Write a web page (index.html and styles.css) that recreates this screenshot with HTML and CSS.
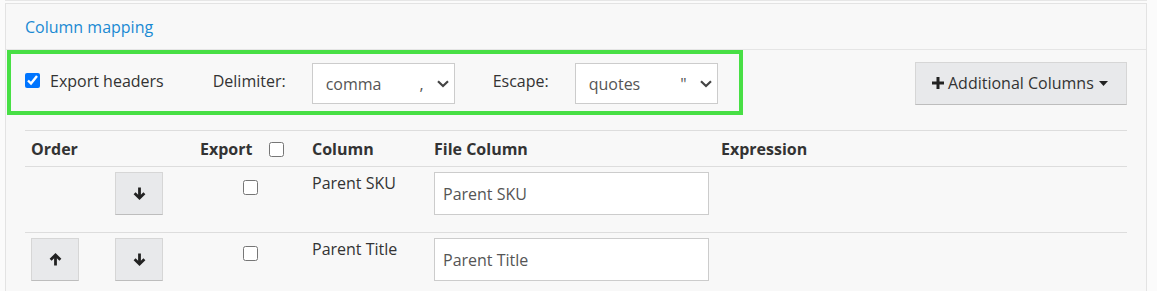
FILE: index.html
```html
<!DOCTYPE html>
<html lang="en">
<head>
<meta charset="utf-8">
<title>Column mapping</title>
<link rel="stylesheet" href="styles.css">
</head>
<body>
<div class="page">
  <div class="topline"></div>
  <section class="panel">
    <div class="panel-heading">Column mapping</div>
    <div class="panel-body">
      <div class="options">
        <div class="highlight">
          <label class="check-label"><input type="checkbox" class="cb" checked> Export headers</label>
          <span class="field-label delim-label">Delimiter:</span>
          <div class="select">
            <span class="sel-text">comma</span>
            <span class="sel-sym">,</span>
            <svg class="chev" width="12" height="8" viewBox="0 0 12 8"><polyline points="1,1.2 6,6 11,1.2" fill="none" stroke="#444" stroke-width="2.2"/></svg>
          </div>
          <span class="field-label esc-label">Escape:</span>
          <div class="select">
            <span class="sel-text">quotes</span>
            <span class="sel-sym">"</span>
            <svg class="chev" width="12" height="8" viewBox="0 0 12 8"><polyline points="1,1.2 6,6 11,1.2" fill="none" stroke="#444" stroke-width="2.2"/></svg>
          </div>
        </div>
        <button class="btn add-btn" type="button">
          <svg class="plus" width="12" height="12" viewBox="0 0 12 12"><rect x="4.5" y="0" width="3" height="12" fill="#222"/><rect x="0" y="4.5" width="12" height="3" fill="#222"/></svg>
          <span>Additional Columns</span>
          <svg class="caret" width="9" height="5" viewBox="0 0 9 5"><polygon points="0,0 9,0 4.5,5" fill="#222"/></svg>
        </button>
      </div>

      <div class="grid">
        <div class="row head">
          <div class="cell">Order</div>
          <div class="cell"></div>
          <div class="cell export-head">Export <input type="checkbox" class="cb head-cb"></div>
          <div class="cell">Column</div>
          <div class="cell">File Column</div>
          <div class="cell">Expression</div>
        </div>
        <div class="row">
          <div class="cell"></div>
          <div class="cell">
            <button class="btn arrow-btn" type="button"><svg width="13" height="13" viewBox="0 0 13 13"><line x1="6.5" y1="0.5" x2="6.5" y2="10.5" stroke="#222" stroke-width="2.8"/><polyline points="1.6,6.2 6.5,11 11.4,6.2" fill="none" stroke="#222" stroke-width="2.8"/></svg></button>
          </div>
          <div class="cell center"><input type="checkbox" class="cb row-cb"></div>
          <div class="cell">Parent SKU</div>
          <div class="cell"><input class="text-input" type="text" value="Parent SKU"></div>
          <div class="cell"></div>
        </div>
        <div class="row">
          <div class="cell">
            <button class="btn arrow-btn" type="button"><svg width="13" height="13" viewBox="0 0 13 13"><line x1="6.5" y1="12.5" x2="6.5" y2="2.5" stroke="#222" stroke-width="2.8"/><polyline points="1.6,6.8 6.5,2 11.4,6.8" fill="none" stroke="#222" stroke-width="2.8"/></svg></button>
          </div>
          <div class="cell">
            <button class="btn arrow-btn" type="button"><svg width="13" height="13" viewBox="0 0 13 13"><line x1="6.5" y1="0.5" x2="6.5" y2="10.5" stroke="#222" stroke-width="2.8"/><polyline points="1.6,6.2 6.5,11 11.4,6.2" fill="none" stroke="#222" stroke-width="2.8"/></svg></button>
          </div>
          <div class="cell center"><input type="checkbox" class="cb row-cb"></div>
          <div class="cell">Parent Title</div>
          <div class="cell"><input class="text-input" type="text" value="Parent Title"></div>
          <div class="cell"></div>
        </div>
      </div>
    </div>
  </section>
</div>
</body>
</html>
```

FILE: styles.css
```css
* { box-sizing: border-box; }

html, body {
  margin: 0;
  padding: 0;
  background: #fbfbfb;
  font-family: "Open Sans", "DejaVu Sans", sans-serif;
  font-size: 16px;
  line-height: 22px;
  color: #333;
  overflow: hidden;
}

.page {
  margin-left: 5px;
  width: 1142px;
}

.topline {
  height: 1px;
  background: #e6e6e6;
  margin-bottom: 2px;
}

.panel {
  background: #f8f8f8;
  border: 1px solid #e3e3e3;
  border-bottom: none;
  height: 300px;
}

.panel-heading {
  padding: 12px 19px 11px;
  color: #1b8ad3;
  border-bottom: 1px solid #e5e5e5;
}

.panel-body {
  padding: 0 19px;
}

.options {
  display: flex;
  align-items: center;
  justify-content: space-between;
  margin-left: -18px;
}

.highlight {
  display: flex;
  align-items: center;
  flex: none;
  border: 4px solid #48df45;
  padding: 9px 0 7px 14px;
  width: 736px;
  height: 65px;
}

.check-label {
  display: flex;
  align-items: center;
  flex: none;
  margin-bottom: 6px;
}

.cb {
  width: 15px;
  height: 15px;
  margin: 0;
  flex: none;
}

.check-label .cb {
  margin-right: 10px;
}

.field-label {
  flex: none;
  margin-bottom: 6px;
}

.delim-label {
  margin-left: 49px;
  margin-right: 26px;
}

.esc-label {
  margin-left: 38px;
  margin-right: 26px;
}

.select {
  display: flex;
  align-items: center;
  flex: none;
  width: 143px;
  height: 41px;
  background: #fff;
  border: 1px solid #ccc;
  padding: 0 5px 0 13px;
  color: #555;
}

.sel-text {
  flex: 1;
  padding-top: 1px;
}

.sel-sym {
  margin-right: 13px;
}

.chev {
  display: block;
  margin-top: 1px;
}

.btn {
  font-family: inherit;
  font-size: 16px;
  color: #333;
  background: #e8e9eb;
  border: 1px solid #d6d6d6;
  border-bottom-color: #bdbdbd;
  border-radius: 0;
  padding: 0;
  cursor: pointer;
}

.add-btn {
  display: flex;
  align-items: center;
  flex: none;
  width: 212px;
  height: 43px;
  padding: 0 15px 0 16px;
  margin-top: 1px;
}

.plus {
  margin-right: 4px;
}

.caret {
  margin-left: 5px;
}

.grid {
  margin-top: 15px;
}

.row {
  display: grid;
  grid-template-columns: 84px 85px 112px 122px 287px 1fr;
  border-top: 1px solid #dddddd;
}

.row .cell {
  padding: 5px 6px 17px;
}

.row.head .cell {
  padding: 7px 6px 6px;
  font-weight: 700;
}

.export-head {
  display: flex;
  align-items: center;
}

.head-cb {
  margin-left: 17px;
}

.center {
  display: flex;
  justify-content: center;
}

.row-cb {
  margin-top: 8px;
}

.arrow-btn {
  width: 48px;
  height: 43px;
  display: flex;
  align-items: center;
  justify-content: center;
}

.text-input {
  width: 275px;
  height: 43px;
  border: 1px solid #ccc;
  background: #fff;
  font-family: inherit;
  font-size: 16px;
  color: #555;
  padding: 0 8px;
  margin: 0;
  border-radius: 0;
  outline: none;
}
```
